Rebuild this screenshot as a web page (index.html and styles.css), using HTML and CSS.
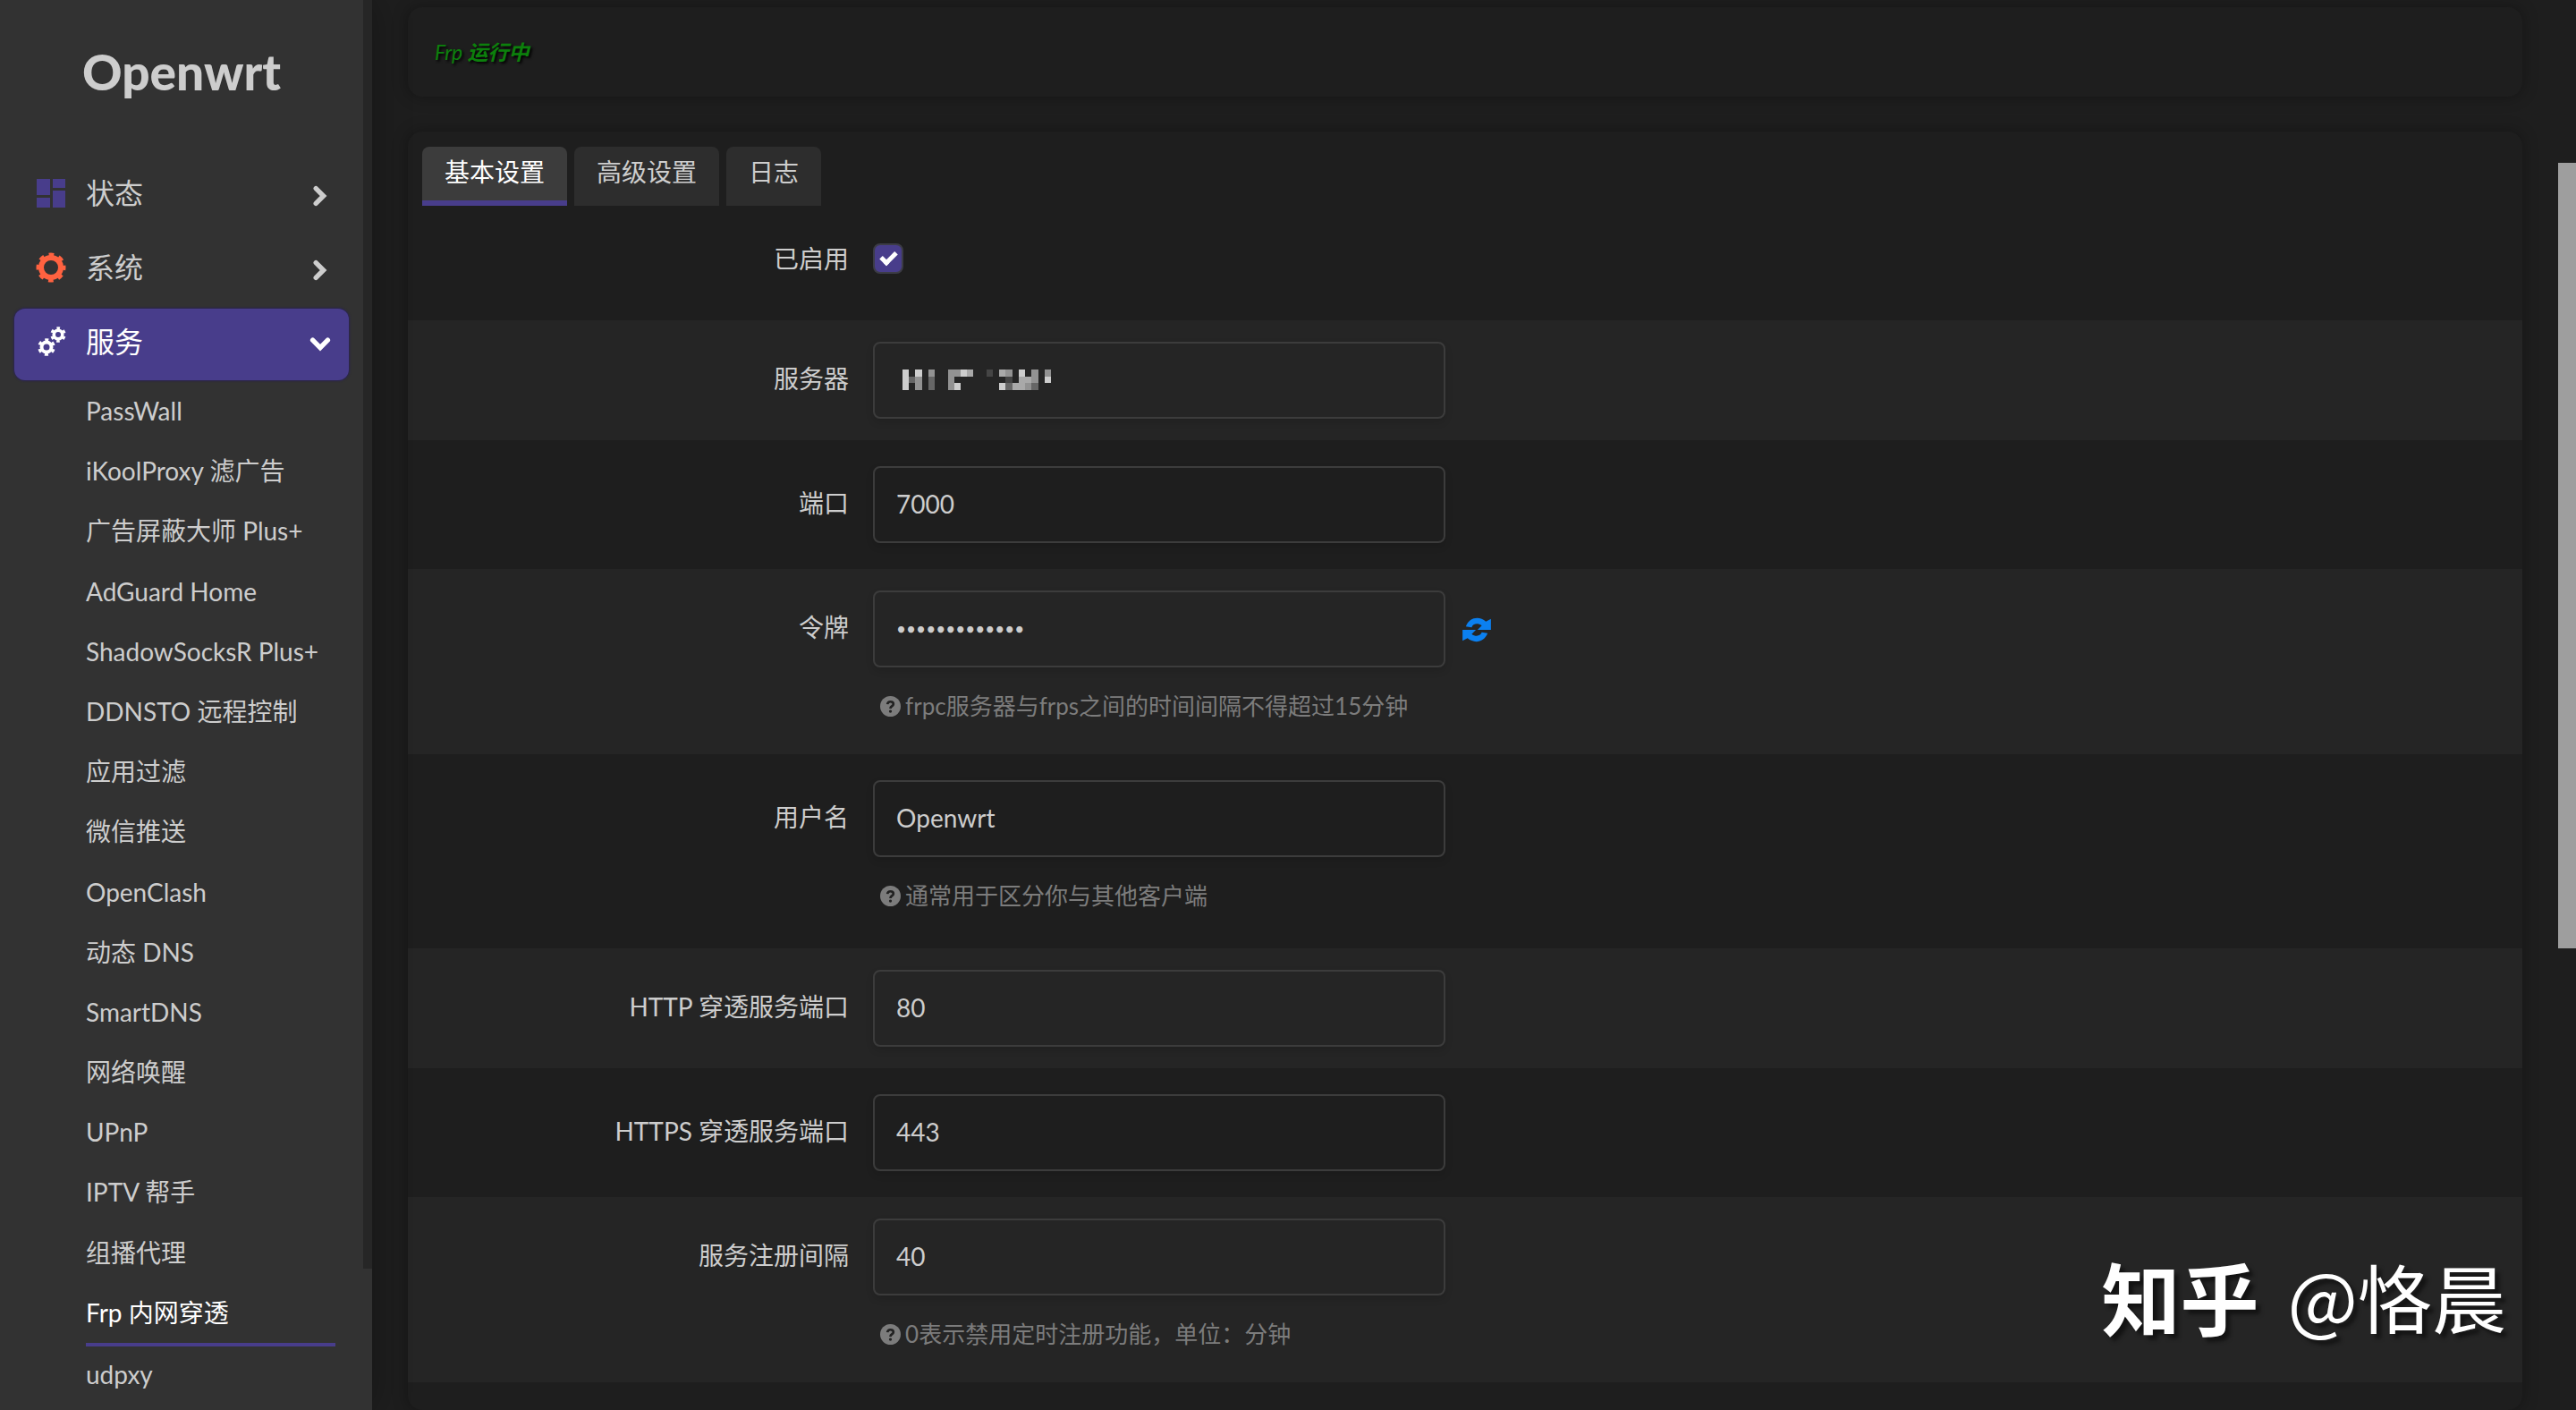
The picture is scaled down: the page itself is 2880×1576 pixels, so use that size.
FILE: index.html
```html
<!DOCTYPE html>
<html lang="zh-CN">
<head>
<meta charset="utf-8">
<title>Frp 内网穿透 - Openwrt</title>
<link rel="stylesheet" href="styles.css">
</head>
<body>
<svg class="defs" aria-hidden="true">
  <symbol id="chevron" viewBox="0 0 20 20"><path d="M6 3l7 7-7 7" fill="none" stroke="currentColor" stroke-width="4.500" stroke-linecap="round"/></symbol>
  <symbol id="help" viewBox="0 0 24 24"><circle cx="12" cy="12" r="12" fill="currentColor"/><path d="M8.500 9.500Q9 6.500 12 6.500Q15.500 6.500 15.500 9.500Q15.500 11 13.500 12Q12 12.800 12 14.500" fill="none" stroke="#222" stroke-width="2.800"/><circle cx="12" cy="17.800" r="1.700" fill="#222"/></symbol>
</svg>
<div class="layout">
  <aside class="sidebar">
    <a class="brand" href="#">Openwrt</a>
    <nav>
      <a class="menu" href="#">
        <svg class="menu-icon status" viewBox="0 0 34 34"><path d="M1 1h15v18H1zM19 1h14v10H19zM1 22h15v11H1zM19 14h14v19H19z" fill="currentColor"/></svg>
        <span>状态</span>
        <svg class="chevron"><use href="#chevron"/></svg>
      </a>
      <a class="menu" href="#">
        <svg class="menu-icon system" viewBox="0 0 34 34"><circle cx="17" cy="17" r="11" fill="none" stroke="currentColor" stroke-width="6"/><circle cx="17" cy="17" r="14" fill="none" stroke="currentColor" stroke-width="5" stroke-dasharray="5.500 5.496" stroke-dashoffset="2.750"/></svg>
        <span>系统</span>
        <svg class="chevron"><use href="#chevron"/></svg>
      </a>
      <a class="menu active" href="#">
        <svg class="menu-icon" viewBox="0 0 34 34"><g fill="none" stroke="currentColor"><circle cx="12" cy="23" r="5.500" stroke-width="4"/><circle cx="12" cy="23" r="8.200" stroke-width="3.200" stroke-dasharray="4 4.587" stroke-dashoffset="-2.300"/><circle cx="25" cy="9" r="4.800" stroke-width="3.600"/><circle cx="25" cy="9" r="7.200" stroke-width="3" stroke-dasharray="3.500 4.040" stroke-dashoffset="-2"/></g></svg>
        <span>服务</span>
        <svg class="chevron open"><use href="#chevron"/></svg>
      </a>
      <ul class="submenu">
        <li><a href="#">PassWall</a></li>
        <li><a href="#">iKoolProxy 滤广告</a></li>
        <li><a href="#">广告屏蔽大师 Plus+</a></li>
        <li><a href="#">AdGuard Home</a></li>
        <li><a href="#">ShadowSocksR Plus+</a></li>
        <li><a href="#">DDNSTO 远程控制</a></li>
        <li><a href="#">应用过滤</a></li>
        <li><a href="#">微信推送</a></li>
        <li><a href="#">OpenClash</a></li>
        <li><a href="#">动态 DNS</a></li>
        <li><a href="#">SmartDNS</a></li>
        <li><a href="#">网络唤醒</a></li>
        <li><a href="#">UPnP</a></li>
        <li><a href="#">IPTV 帮手</a></li>
        <li><a href="#">组播代理</a></li>
        <li><a class="current" href="#">Frp 内网穿透</a></li>
        <li><a href="#">udpxy</a></li>
      </ul>
    </nav>
    <div class="side-scroll"></div>
  </aside>
  <main class="content">
    <section class="card notice"><em>Frp <b>运行中</b></em></section>
    <form class="card settings">
      <div class="tabs">
        <button type="button" class="tab selected">基本设置</button>
        <button type="button" class="tab">高级设置</button>
        <button type="button" class="tab">日志</button>
      </div>
      <div class="row toggle">
        <label for="enabled">已启用</label>
        <div class="field"><input type="checkbox" id="enabled" checked></div>
      </div>
      <div class="row">
        <label for="server">服务器</label>
        <div class="field">
          <div class="control">
            <input type="text" id="server">
            <svg class="mosaic" viewBox="0 0 23 3" preserveAspectRatio="none" shape-rendering="crispEdges">
              <path fill="#cdcdcd" d="M0 0h1v3H0zM2 0h1v1H2zM9 0h1v1H9zM18 0h1v1h-1zM22 1h1v1h-1zM8 2h1v1H8zM15 2h1v1h-1z"/>
              <path fill="#a9a9a9" d="M10 0h1v1h-1zM15 0h1v1h-1zM18 1h2v1h-2zM17 2h2v1h-2z"/>
              <path fill="#929292" d="M2 1h1v2H2zM7 0h1v3H7zM8 0h1v1H8zM16 0h1v1h-1zM20 0h1v2h-1zM22 0h1v1h-1zM19 2h1v1h-1zM4 0h1v1H4z"/>
              <path fill="#666" d="M1 1h1v1H1zM4 1h1v2H4zM16 2h1v1h-1zM20 2h1v1h-1z"/>
              <path fill="#454545" d="M13 0h1v1h-1zM16 1h1v1h-1z"/>
            </svg>
          </div>
        </div>
      </div>
      <div class="row">
        <label for="port">端口</label>
        <div class="field"><input type="text" id="port" value="7000"></div>
      </div>
      <div class="row">
        <label for="token">令牌</label>
        <div class="field">
          <div class="control">
            <input type="password" id="token" value="abcdefghijklm">
            <button type="button" class="reveal" aria-label="显示令牌"><svg viewBox="0 0 36 30"><g fill="currentColor"><path id="arrow" d="M5 11C9 0 21-2 29 5L35 2V15H19L24 10C19 6 13 8 12 12z"/><use href="#arrow" transform="rotate(180 18 15)"/></g></svg></button>
          </div>
          <p class="hint"><svg><use href="#help"/></svg>frpc服务器与frps之间的时间间隔不得超过15分钟</p>
        </div>
      </div>
      <div class="row">
        <label for="user">用户名</label>
        <div class="field">
          <input type="text" id="user" value="Openwrt">
          <p class="hint"><svg><use href="#help"/></svg>通常用于区分你与其他客户端</p>
        </div>
      </div>
      <div class="row">
        <label for="http">HTTP 穿透服务端口</label>
        <div class="field"><input type="text" id="http" value="80"></div>
      </div>
      <div class="row">
        <label for="https">HTTPS 穿透服务端口</label>
        <div class="field"><input type="text" id="https" value="443"></div>
      </div>
      <div class="row">
        <label for="interval">服务注册间隔</label>
        <div class="field">
          <input type="text" id="interval" value="40">
          <p class="hint"><svg><use href="#help"/></svg>0表示禁用定时注册功能，单位：分钟</p>
        </div>
      </div>
    </form>
  </main>
</div>
<div class="page-scroll"></div>
<div class="watermark"><b>知乎</b><span>@恪晨</span></div>
</body>
</html>
```
FILE: styles.css
```css
* { box-sizing: border-box; }

body {
  margin: 0;
  background: #1e1e1e;
  color: #cdcdcd;
  font: 28px/40px Lato, "Noto Sans CJK SC", sans-serif;
}

a { color: inherit; text-decoration: none; }
button, input { font: inherit; color: inherit; }
.defs { display: none; }

.layout {
  display: flex;
  height: 100vh;
  overflow: hidden;
}

/* Sidebar */
.sidebar {
  position: relative;
  flex: 0 0 416px;
  padding: 0 26px 0 16px;
  background: #323232;
  box-shadow: 0 0 40px rgba(0, 0, 0, .3);
}
.brand {
  display: block;
  height: 179px;
  padding-top: 44px;
  text-align: center;
  font-size: 55px;
  line-height: 72px;
  font-weight: 900;
}
.menu {
  display: flex;
  align-items: center;
  height: 80px;
  margin-bottom: 3px;
  padding: 0 20px 0 24px;
  border-radius: 12px;
  font-size: 32px;
}
.menu span { flex: 1; padding: 0 0 6px 22px; }
.menu-icon { width: 34px; height: 34px; margin-bottom: 6px; }
.status { color: #483d8b; }
.system { color: #ff6240; }
.chevron { width: 24px; height: 24px; }
.chevron.open { transform: rotate(90deg); }
.menu.active {
  margin-bottom: 0;
  background: #483d8b;
  color: #fff;
  box-shadow: 0 0 2px 1px #2a2450;
}
.submenu {
  margin: 0;
  padding: 1px 15px 0 80px;
  list-style: none;
  line-height: 2.4;
}
.submenu a { display: block; white-space: nowrap; }
.submenu .current {
  margin-bottom: -2px;
  border-bottom: 4px solid #483d8b;
  color: #fff;
}
.side-scroll {
  position: absolute;
  top: 0;
  right: 0;
  width: 10px;
  height: 90%;
  background: #262626;
}

/* Content */
.content {
  flex: 1;
  display: flex;
  flex-direction: column;
  gap: 39px;
  padding: 8px 60px 0 40px;
}
.card {
  border-radius: 16px;
  background: #1e1e1e;
  box-shadow: 0 0 16px 2px rgba(0, 0, 0, .25);
}
.notice {
  padding: 30px;
  color: #0c800c;
  font-size: 23px;
  text-shadow: 2px 2px 3px #000;
}
.settings { flex: 1; }
.tabs {
  display: flex;
  gap: 8px;
  padding: 17px 16px 0;
}
.tab {
  height: 66px;
  padding: 0 25px 10px;
  border: 0;
  border-radius: 8px 8px 0 0;
  background: #2d2d2d;
}
.tab.selected {
  padding-bottom: 4px;
  border-bottom: 6px solid #483d8b;
  background: #3c3c3c;
  color: #fff;
}
.row {
  display: grid;
  grid-template-columns: 22% 1fr;
  padding: 29px 0;
}
.row:nth-child(odd) {
  padding: 24px 0;
  background: #252525;
}
.row.toggle { padding: 29px 0 46px; background: none; line-height: 45px; }
.row label {
  padding: 21px 27px 0 0;
  text-align: right;
}
.row.toggle label { padding-top: 8px; }
.control { display: flex; align-items: center; position: relative; }
input[type="text"], input[type="password"] {
  display: block;
  width: 640px;
  height: 86px;
  padding: 0 24px 2px;
  border: 2px solid #3c3c3c;
  border-radius: 8px;
  background: transparent;
  box-shadow: 0 4px 8px rgba(0, 0, 0, .12);
}
input[type="password"] { font-size: 19px; }
input[type="checkbox"] {
  display: block;
  appearance: none;
  width: 34px;
  height: 34px;
  margin: 13px 0 0;
  border: 2px solid #3c3c46;
  border-radius: 8px;
  background: #483d8b;
}
input[type="checkbox"]:checked::before {
  content: "";
  display: block;
  width: 6px;
  height: 13px;
  margin: 4px auto 0;
  border: solid #fff;
  border-width: 0 5px 5px 0;
  box-sizing: content-box;
  transform: rotate(45deg);
}
.mosaic {
  position: absolute;
  left: 33px;
  top: 31px;
  width: 166px;
  height: 23px;
}
.reveal {
  display: flex;
  margin-left: 18px;
  padding: 2px 0 0;
  border: 0;
  background: none;
  color: #0b80f0;
}
.reveal svg { width: 34px; height: 28px; }
.hint {
  display: flex;
  align-items: center;
  gap: 5px;
  margin: 24px 0 0;
  padding: 0 0 11px 8px;
  color: #7c7c7c;
  font-size: 26px;
  line-height: 38px;
}
.hint svg { width: 23px; height: 23px; }

/* Overlays */
.page-scroll {
  position: fixed;
  top: 182px;
  right: 0;
  width: 20px;
  height: 878px;
  background: #9e9e9e;
}
.watermark {
  position: fixed;
  right: 78px;
  bottom: 68px;
  display: flex;
  align-items: center;
  gap: 32px;
  color: #fff;
  font-family: "Noto Sans CJK SC", sans-serif;
  font-size: 83px;
  line-height: 120px;
  text-shadow: 5px 5px 4px rgba(0, 0, 0, .5);
}
.watermark b { font-size: 88px; }
```
